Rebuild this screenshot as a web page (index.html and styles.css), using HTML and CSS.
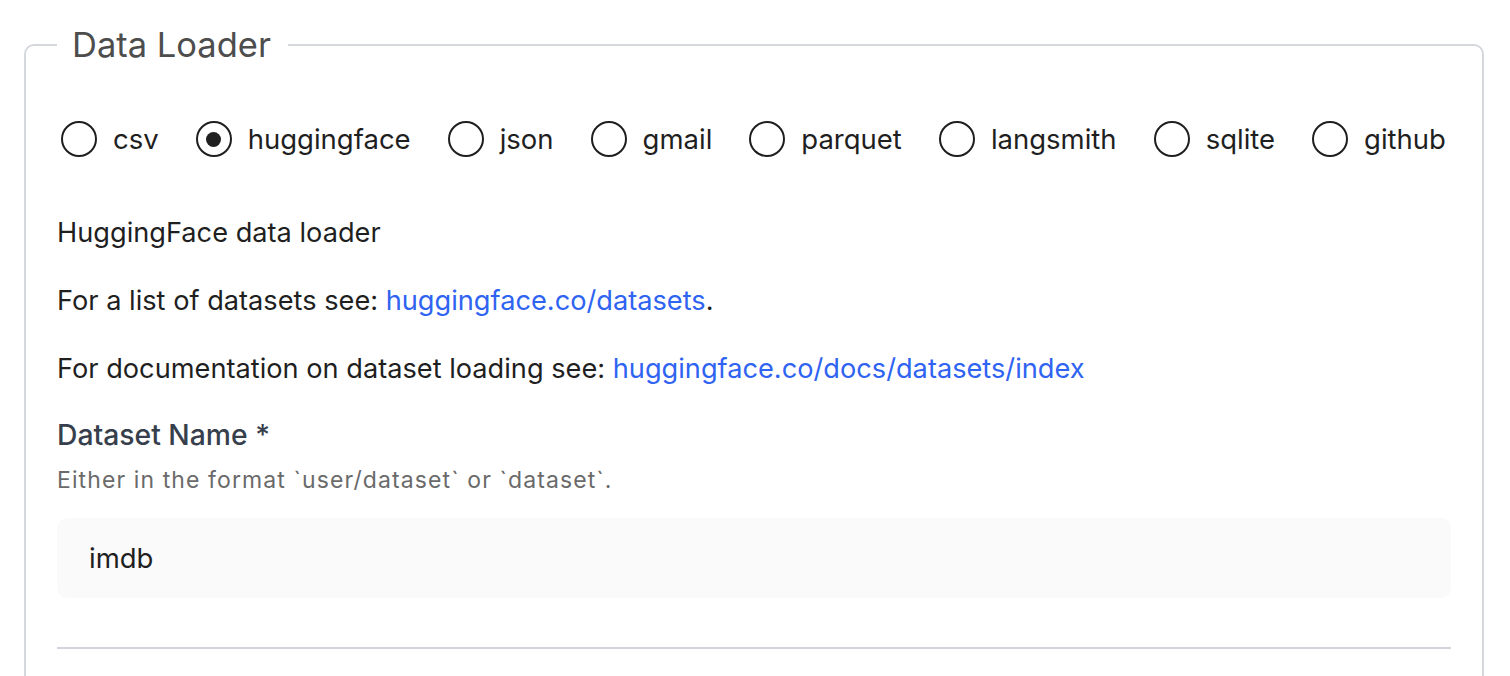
FILE: index.html
```html
<!DOCTYPE html>
<html>
<head>
<meta charset="utf-8">
<link rel="stylesheet" href="styles.css">
</head>
<body>
<fieldset class="loader">
  <legend class="loader-title">Data Loader</legend>
  <div class="radios">
    <label class="radio"><span class="dot"></span><span class="radio-label">csv</span></label>
    <label class="radio checked"><span class="dot"></span><span class="radio-label">huggingface</span></label>
    <label class="radio"><span class="dot"></span><span class="radio-label">json</span></label>
    <label class="radio"><span class="dot"></span><span class="radio-label">gmail</span></label>
    <label class="radio"><span class="dot"></span><span class="radio-label">parquet</span></label>
    <label class="radio"><span class="dot"></span><span class="radio-label">langsmith</span></label>
    <label class="radio"><span class="dot"></span><span class="radio-label">sqlite</span></label>
    <label class="radio"><span class="dot"></span><span class="radio-label">github</span></label>
  </div>
  <p class="para">HuggingFace data loader</p>
  <p class="para">For a list of datasets see: <a class="link" href="#">huggingface.co/datasets</a>.</p>
  <p class="para">For documentation on dataset loading see: <a class="link" href="#">huggingface.co/docs/datasets/index</a></p>
  <div class="field">
    <div class="field-label">Dataset Name *</div>
    <div class="field-desc">Either in the format `user/dataset` or `dataset`.</div>
    <div class="input">imdb</div>
  </div>
  <hr class="rule">
</fieldset>
</body>
</html>
```
FILE: styles.css
```css
html, body {
  margin: 0;
  padding: 0;
  background: #ffffff;
  font-family: Inter, "Noto Sans", sans-serif;
  color: #1f1f1f;
}
body {
  padding: 26px 26px 0 24px;
}
.loader {
  margin: 0;
  border: 2px solid #d5d8dc;
  border-radius: 10px;
  padding: 18px 31px 80px 31px;
  min-width: 0;
}
.loader-title {
  font-size: 34.5px;
  color: #4d4d4d;
  padding: 0 17px 0 15px;
  margin-left: 0;
  line-height: 38px;
  font-weight: 400;
}
.radios {
  display: flex;
  align-items: center;
  gap: 37px;
  height: 58px;
  padding-top: 28px;
  padding-left: 4px;
  margin-bottom: 50px;
}
.radio {
  display: flex;
  align-items: center;
  gap: 16px;
  font-size: 27.5px;
  color: #1f1f1f;
}
.dot {
  width: 32px;
  height: 32px;
  border: 2px solid #1f1f1f;
  border-radius: 50%;
  display: flex;
  align-items: center;
  justify-content: center;
}
.checked .dot::after {
  content: "";
  width: 15px;
  height: 15px;
  border-radius: 50%;
  background: #1f1f1f;
}
.para {
  margin: 0 0 38px 0;
  font-size: 27.2px;
  line-height: 30px;
}
.link {
  color: #2f63f2;
  text-decoration: none;
}
.field-label {
  font-size: 28.3px;
  font-weight: 500;
  color: #373f4c;
  line-height: 30px;
  margin-top: -2px;
}
.field-desc {
  font-size: 23px;
  color: #6a6a6a;
  letter-spacing: 1.1px;
  line-height: 26px;
  margin-top: 17px;
}
.input {
  margin-top: 25px;
  height: 80px;
  background: #fafafa;
  border-radius: 10px;
  box-sizing: border-box;
  padding-left: 32px;
  display: flex;
  align-items: center;
  font-size: 27.5px;
}
.rule {
  margin: 49px 0 0 0;
  border: 0;
  border-top: 2px solid #d1d5db;
}
```
